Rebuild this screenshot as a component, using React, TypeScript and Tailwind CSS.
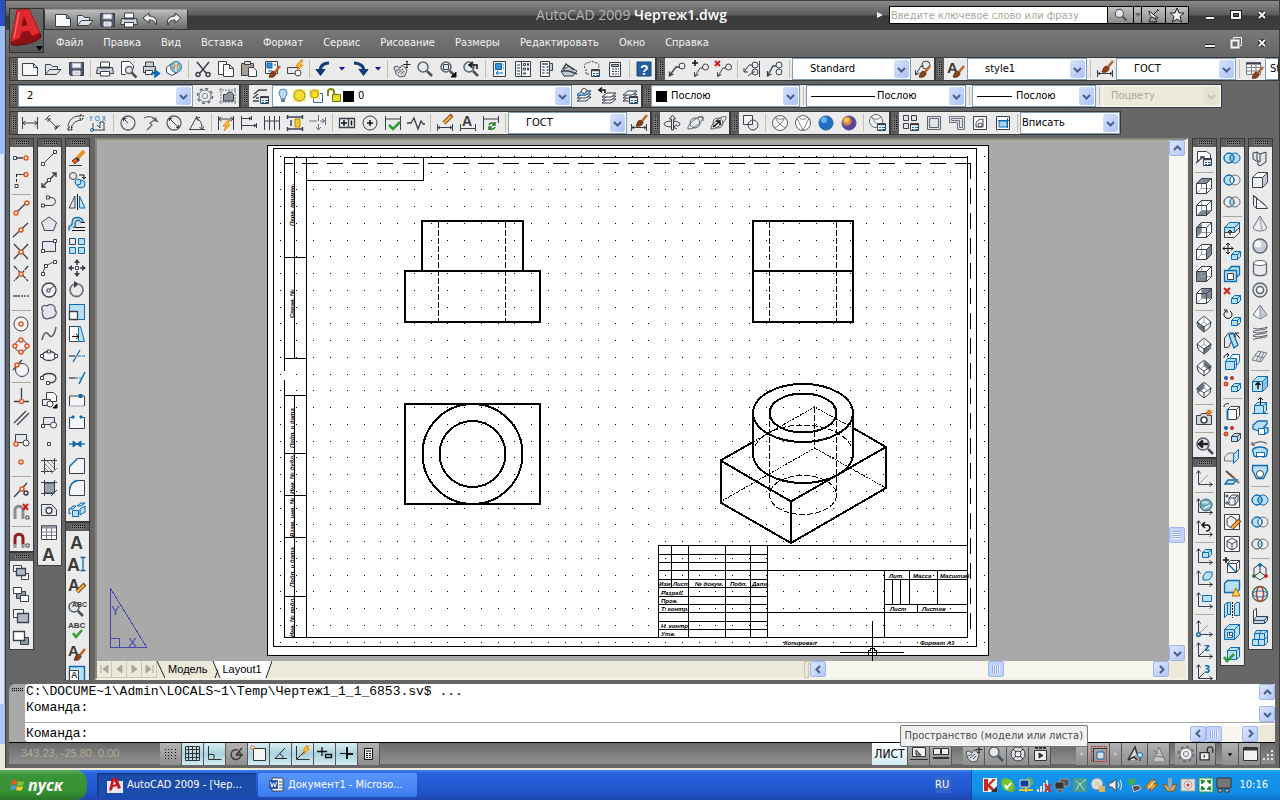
import type { ReactNode } from "react";

const K = "#39414d";
const B = "#0f6ab4";
const L = "#b9dff2";
const O = "#e9541b";

type PProps = { d: string; s?: string; f?: string; w?: number; dash?: string };
const P = ({ d, s = K, f = "none", w = 1, dash }: PProps) => (
  <path d={d} stroke={s} fill={f} strokeWidth={w} strokeDasharray={dash} />
);

type CProps = { x: number; y: number; r: number; s?: string; f?: string; w?: number };
const C = ({ x, y, r, s = K, f = "none", w = 1 }: CProps) => (
  <circle cx={x} cy={y} r={r} stroke={s} fill={f} strokeWidth={w} />
);

// orange snap marker
const Dot = ({ x, y }: { x: number; y: number }) => <C x={x} y={y} r={2} s={O} f="#fff" w={1.5} />;

// small grip square
const Sq = ({ x, y }: { x: number; y: number }) => <P d={`M${x - 1.5} ${y - 1.5}h3v3h-3z`} f="#fff" />;

const Brush = ({ x = 0, y = 0 }: { x?: number; y?: number }) => (
  <g transform={`translate(${x} ${y})`}>
    <P d="M17 5l-5 6" s="#b5652a" w={2.5} />
    <P d="M6 16c1-1 1-5 4-6l3 2c0 3-3 5-7 4z" s="#6b3211" f="#8a4216" />
  </g>
);

const Pencil = () => (
  <>
    <P d="M17 5l-8 8" s="#8a4a12" w={4} />
    <P d="M16 6l-7 7" s="#f8b54a" w={2} />
  </>
);

const Glass = ({ x = 8, y = 8, r = 5 }) => (
  <>
    <P d={`M${x + r - 1} ${y + r - 1}l5 5`} s="#4a4f58" w={2.5} />
    <C x={x} y={y} r={r} s="#5c626c" f="#e3eaf0" w={1.5} />
  </>
);

const Bolt = ({ x = 0, y = 0 }) => <P d={`M${x + 6} ${y}l-5 6h3l-2 5 6-6h-3l3-5z`} s="#e8861a" f="#ffc62e" />;

const Sheets = () => (
  <>
    <P d="M3 15l5-4h9l-5 4z" f="#f6f8fa" />
    <P d="M3 12l5-4h9l-5 4z" f="#f6f8fa" />
    <P d="M3 9l5-4h9l-5 4z" f="#f6f8fa" />
  </>
);

const Panel = () => (
  <>
    <P d="M9.5 10.5h8v7h-8z" f="#fff" />
    <P d="M10 11.5h8" s={K} w={1.5} />
    <P d="M11 14.5h2m1 0h3m-6 2h2m1 0h3" s={B} />
  </>
);

const Cube = ({ top = "#fff", front = "#fff", side = "#fff", s = K }) => (
  <>
    <P d="M2.5 7.5l5-5h10l-5 5z" f={top} s={s} />
    <P d="M2.5 7.5h10v10h-10z" f={front} s={s} />
    <P d="M12.5 7.5l5-5v10l-5 5z" f={side} s={s} />
  </>
);

const WireCube = ({ d }: { d: string }) => (
  <>
    <P d="M2.500 7.500l5-5h10v10l-5 5h-10z" f="#fff" />
    <P d={d} f="#7d8592" s="#7d8592" />
    <P d="M7.500 2.500v10h10M7.500 12.500l-5 5" s="#9aa0a8" />
    <P d="M2.500 7.500l5-5h10v10l-5 5h-10zM2.500 7.500h10v10M12.500 7.500l5-5" />
  </>
);

const IsoCube = ({ d }: { d: string }) => (
  <>
    <P d="M10 2l7 6-1 5-6 5-6-5-1-5z" f="#fff" />
    <P d={d} f="#69717d" s="#69717d" />
    <P d="M3 8l7 5 7-5M10 13v5" />
    <P d="M4 13l6-5 6 5M10 2v6" s="#9aa0a8" />
  </>
);

const MiniCube = ({ x = 9, y = 8, s = B }) => (
  <g transform={`translate(${x} ${y})`}>
    <P d="M.5 3.500l3-3h6v5l-3 3h-6z" s={s} f={L} />
    <P d="M.5 3.500h6v5M6.500 3.500l3-3" s={s} />
  </g>
);

const Axes = () => <P d="M4.500 3v13.500h14M2.500 5.500l2-3 2 3M15.500 14.500l3 2-3 2" />;
const Dim = () => <P d="M2.500 4v12M17.500 4v12M3 10h14M5.500 8l-3 2 3 2M14.500 8l3 2-3 2" />;
const LowDim = () => <P d="M2.500 11v7M17.500 11v7M3 14.500h14M5 13l-2 1.500 2 1.500M15 13l2 1.500-2 1.500" />;

const Letter = ({ x = 2, y = 17, size = 18, children }: { x?: number; y?: number; size?: number; children: ReactNode }) => (
  <text x={x} y={y} fontSize={size} fill="#3b3b3b" stroke="none" fontFamily="Liberation Sans, sans-serif" fontWeight="bold">
    {children}
  </text>
);

const Rings = ({ a = "none", b = "none", mid = "none" }) => (
  <>
    <C x={7} y={10} r={5} s={a === "none" ? "#6d747e" : B} f={a} />
    <C x={13} y={10} r={5} s={b === "none" ? "#6d747e" : B} f={b} />
    <path d="M10 6a5 5 0 0 1 0 8a5 5 0 0 1 0-8z" fill={mid} stroke={B} />
    <C x={7} y={10} r={5} s={a === "none" ? "#6d747e" : B} />
  </>
);

const icons: Record<string, ReactNode> = {
  // standard
  new: <P d="M2.5 4.5h11l4 4v8h-15zM13.5 4.5v4h4" f="#f7f8f9" />,
  open: <P d="M2.500 15.500v-10h5l2 2h5v3M2.500 15.500l4-5h11.500l-4.500 5z" f="#dfe5ea" />,
  save: (
    <>
      <P d="M3.500 3.500h14v13h-13l-1-1z" f="#4c5566" />
      <P d="M6 4h9v5H6z" s="#8d96a5" f="#f3f5f8" />
      <P d="M7 12h7v4H7z" s="#f3f5f8" f="#cfd4db" />
    </>
  ),
  print: (
    <>
      <P d="M5.500 8v-5h9v5" f="#fff" />
      <P d="M2.500 8.500h15l1 6h-17z" f="#cdd2d8" />
      <P d="M5 8.500h10" w={2} />
      <P d="M5.500 12.500h9v4.500h-9z" f="#fff" />
    </>
  ),
  preview: (
    <>
      <P d="M3.500 15.500v-13h8l4 4v3M3.500 15.500h4" f="#fff" />
      <Glass x={11} y={11} r={3.500} />
    </>
  ),
  publish: (
    <>
      <P d="M4.500 7v-4h8v4M2.500 7.500h12v6h-12z" f="#cdd2d8" />
      <P d="M4.500 11.500h7v4h-7z" f="#fff" />
      <P d="M10 14.500h5M14 11l4.500 3.500-4.500 3.500z" s={B} f={B} w={1.500} />
    </>
  ),
  globe: (
    <>
      <P d="M2.500 8.500l5-4h6v9l-6 3-5-3z" f="#fff" />
      <C x={12} y={8} r={5.500} s="#2d7bb5" f="#7cc1e0" />
      <P d="M10 4c2 2 1 5 4 7M15 5c-3 1-4 3-7 5" s="#e8861a" w={1.500} />
      <P d="M12 3v10" s="#fff" />
    </>
  ),
  cut: (
    <>
      <P d="M4 3l9 11M16 3L7 14" w={1.500} />
      <C x={5} y={15.500} r={2} w={1.500} />
      <C x={15} y={15.500} r={2} w={1.500} />
    </>
  ),
  copyclip: (
    <>
      <P d="M2.500 2.500h8v13h-8z" f="#fff" />
      <P d="M7.500 5.500h6l4 4v8h-10zM13.500 5.500v4h4" f="#fff" />
    </>
  ),
  paste: (
    <>
      <P d="M2.500 4.500h12v12h-12z" f="#a99f93" />
      <P d="M5.500 2.500h6v3h-6z" f="#d8dce2" />
      <P d="M9.500 8.500h5l3 3v6h-8z" f="#fff" />
    </>
  ),
  match: (
    <>
      <P d="M3.500 2.500h12v12h-12z" f="#f3f5f8" />
      <P d="M5 4h5v5H5z" s={B} f="#3f8dcb" />
      <P d="M6 12h4M12 6h2" s={B} />
      <Brush x={1} y={2} />
    </>
  ),
  blockedit: (
    <>
      <P d="M2.500 8.500h11v6h-11z" f="#e4e7eb" />
      <C x={13} y={14} r={3} f="#fff" />
      <Bolt x={10} y={1} />
    </>
  ),
  undo: (
    <>
      <P d="M15 4c-6 0-9 3-9 9" s="#123a72" w={3} />
      <P d="M2 10.500h9l-4.500 6z" s="#123a72" f="#123a72" />
    </>
  ),
  redo: (
    <>
      <P d="M4 4c6 0 10 3 10 9" s="#123a72" w={3} />
      <P d="M9 10.500h9l-4.500 6z" s="#123a72" f="#123a72" />
    </>
  ),
  pan: (
    <>
      <P d="M2 8l3-1 3 2 2-3 3 2 2 3-2 6-5 1-4-3z" s="#555b64" f="#d5d8dc" />
      <P d="M4 12l4-2M6 14l5-4M9 15l3-3" s="#555b64" />
      <P d="M15 2v7M11.500 5.500h7M14 3l1-1 1 1M14 8l1 1 1-1" s="#222" />
    </>
  ),
  zoom: <Glass />,
  zoomwin: (
    <>
      <Glass />
      <P d="M5.500 5.500h5v5h-5z" />
      <P d="M18 13v5h-5z" s="#111" f="#111" />
    </>
  ),
  zoomprev: (
    <>
      <Glass />
      <P d="M9 6h7v4M12 3l-4 3 4 3" s="#111" w={1.500} />
    </>
  ),
  properties: (
    <>
      <P d="M3.500 2.500h12v15h-12z" f="#f3f5f8" />
      <P d="M5.500 4.500h6v6h-6z" s={B} f="#3f8dcb" />
      <P d="M13 6h1M13 9h1M6 14h7M8 12l-2 2 2 2" s={B} />
    </>
  ),
  designcenter: (
    <>
      <P d="M2.500 2.500h15v15h-15zM8.500 3v14" f="#f3f5f8" />
      <P d="M4 6h3M4 9h3M4 12h3M4 15h3" />
      <P d="M10.500 4.500h2v2h-2zM14.500 4.500h1v2h-1zM10.500 9h2v2h-2zM14.500 9h1v2h-1zM10.500 14h2v1h-2z" />
    </>
  ),
  palettes: (
    <>
      <P d="M4.500 2.500h9v15h-9z" f="#f3f5f8" />
      <P d="M13.500 4.500h3v7h-3z" f="#c4cad2" />
      <P d="M6 5h6M6.500 8h2m2 0h2m-6 3h2m2 0h2m-6 3h2m2 0h2" w={2} s="#777f8b" />
    </>
  ),
  sheetset: (
    <>
      <P d="M2 12l8-5 8 5-4 5H5z" f="#c4cad2" />
      <P d="M4 10l3-5 8 6M2 12h8l8 3" w={1.500} />
    </>
  ),
  markup: (
    <>
      <P d="M3 9c-2-4 2-6 4-5 2-3 5-1 6 0 4-1 5 3 3 5" dash="2 1" />
      <P d="M4 10v5h4" dash="2 1" />
      <Panel />
    </>
  ),
  calc: (
    <>
      <P d="M4.500 3.500h11v14h-11z" f="#f3f5f8" />
      <P d="M6.500 5.500h7v2h-7z" f="#aeb6c0" />
      <P d="M7 10h2m1 0h2m1 0h1M7 12.500h2m1 0h2m1 0h1M7 15h2m1 0h2m1 0h1" />
    </>
  ),
  help: (
    <>
      <P d="M3 3h14v14H3z" s="#17457c" f="#245e9f" />
      <text x={6} y={15.500} fontSize={14} fontWeight="bold" fill="#fff" stroke="none" fontFamily="Liberation Sans, sans-serif">?</text>
    </>
  ),
  // multileaders
  leader: <><P d="M3 16l6-8h4M2.500 12.500v4.500l4-2" w={1.300} /><C x={15} y={7} r={3} /></>,
  leaderadd: <><P d="M5 17l5-8h3M4.500 13v4.500l4-2" /><C x={15.500} y={8} r={3} /><P d="M2 4h6M5 1v6" s="#111" w={1.500} /></>,
  leaderdel: <><P d="M5 17l5-8h3M4.500 13v4.500l4-2" /><C x={15.500} y={8} r={3} /><P d="M2 2l5 5M7 2L2 7" s="#cf1f1f" w={2} /></>,
  leaderalign: <><P d="M2 13l5-7h4M2 9v4h4M6 17l5-4h2M17.500 2v16" /><C x={13} y={6} r={3} /><C x={13} y={13} r={3} /></>,
  leadercollect: <><P d="M3 16l5-9h3M2.500 12v5l4-2" w={1.300} /><C x={14} y={6} r={3} /><C x={14} y={13} r={3} /></>,
  leaderstyle: <><P d="M3 15l5-8h3M2.500 11v5l4-2" /><C x={13} y={6} r={4} /><Brush y={2} /></>,
  textstyle: <><Letter x={1} y={14} size={15}>A</Letter><Brush x={1} y={2} /></>,
  dimstyle: <><LowDim /><Brush x={1} y={-3} /></>,
  tablestyle: (
    <>
      <P d="M2.500 3.500h14v12h-14zM2.500 8.500h14M2.500 12h14M7.500 6v9.500M12 6v9.500" f="#fff" s="#777f8b" />
      <P d="M2 4.500h15" w={2} />
      <Brush x={2} y={3} />
    </>
  ),
  // workspaces and layers
  gear: (
    <>
      <circle cx={10} cy={10} r={7.500} stroke="#5c636e" strokeWidth={1.500} strokeDasharray="3 2.890" />
      <C x={10} y={10} r={6} s="#6d747e" f="#eceef0" />
      <C x={10} y={10} r={2.500} s="#6d747e" f="#fff" />
    </>
  ),
  wshome: (
    <>
      <P d="M3 2v16M17 2v16M1 4h18M1 16h18" dash="2 1" s="#6d747e" />
      <P d="M5.500 8.500h3l2-2.500h3l2 3v6h-10z" f="#8e959f" />
    </>
  ),
  layers: <><P d="M3 8l5-4h8M2 12l5-4M2 15h6M5 12h3" w={1.300} /><Panel /></>,
  layercur: <><Sheets /><P d="M3 9l5-4h9l-5 4z" s={B} f={L} /><C x={10} y={5} r={2.500} f="#fff" /></>,
  layerprev: <><g transform="translate(2 2)"><Sheets /></g><P d="M2 4h6v3M5 1.500L2 4l3 2.500" s="#111" w={1.500} /></>,
  layerstate: <><Sheets /><Panel /></>,
  // dimensions
  dimlinear: <Dim />,
  dimaligned: <P d="M2 7l5-5M12 17l5-5M4.500 5.500l9.500 9M5 9V6h3M11 15h3v-3" />,
  dimarc: <><P d="M5 17C5 11 10 7 16 7M2 13C3 7 7 3 13 3" /><P d="M2 17h4v-3H2zM14 2h3v4h-3z" s="#111" dash="2 1" /></>,
  dimord: <><text x={0} y={8} fontSize={7} fill={B} stroke="none">Y O X</text><P d="M4 10v7h12M8 12l3 3V9h4v8" /><C x={3} y={17} r={1.500} s={B} /></>,
  dimradius: <><C x={10} y={10} r={7} w={1.300} s="#5c636e" /><P d="M10 10L6 6M5.500 8.500v-3h3" /></>,
  dimjog: <P d="M3 5c5-3 11-1 14 4M6 17l5-5-2-2 6-4M11.500 5.500h3.500V9" w={1.300} s="#5c636e" />,
  dimdiam: <><C x={10} y={10} r={7} w={1.300} s="#5c636e" /><P d="M5.500 5.500l9 9M5.500 8v-2.500h2.500M12 14.500h2.500V12" /></>,
  dimang: <P d="M2 16.500h16M3 16L10 3M9 5c5 2 6 6 6 11M11.500 8L9 5l4-.5M12.500 14l2.500 2.500 2-3" />,
  dimquick: <><P d="M2.500 3v14M17.500 3v14M3 6h14M5.500 4l-3 2 3 2M14.500 4l3 2-3 2" /><Bolt x={6} y={7} /></>,
  dimbase: <P d="M2.500 3v14M12.500 3v4M17.500 10v5M3 5.500h9M3 12.500h14M10 4l2 1.500-2 1.500M15 11l2 1.500-2 1.500" />,
  dimcont: <P d="M2.500 3v14M7.500 3v14M12.500 3v14M17.500 3v14M3 8h14" />,
  dimspace: <><P d="M2.500 2v4M17.500 2v4M3 4h14M2.500 14v4M17.500 14v4M3 16h14M6 7v6" w={1.500} /><P d="M10 6h5v8h-5z" s="#b98a12" f="#f4c534" /></>,
  dimbreak: <P d="M1 8h8M12 8h5M17.500 4v8M10.500 2v6M10.500 11v6M8 14l2.500 3 2.500-3M14 6l3 2-3 2" s="#6d747e" />,
  tolerance: <><P d="M2.500 5.500h15v9h-15zM11.500 5.500v9" w={1.300} /><P d="M4 10h6M7 7v6" s="#111" w={1.500} /><P d="M14.500 7.500v5" s="#111" w={1.500} /></>,
  centermark: <><C x={10} y={10} r={7} /><P d="M10 7v6M7 10h6" s="#111" w={1.500} /></>,
  inspect: <><P d="M2.500 3v14M17.500 3v14M3 6h14" /><P d="M6 12l4 4 7-7" s="#2e9e2e" w={2.500} /></>,
  joglinear: <P d="M1 10h4l3-5 4 11 3-8 2 3h2" w={1.300} />,
  dimedit: <><LowDim /><g transform="translate(0 -3)"><Pencil /></g></>,
  dimtedit: <><P d="M2.500 11v7M17.500 11v7M3 15.500h14" /><Letter x={4} y={13} size={14}>A</Letter></>,
  dimupdate: <><P d="M2.500 3v14M17.500 3v7M3 6h14" /><P d="M8 12c1-3 5-3 6 0M14 14c-1 3-5 3-6 0M14 9v3h-3M8 17v-3h3" s="#2e7d2e" w={1.500} /></>,
  // orbit and visual styles
  orbit: <><ellipse cx={10} cy={11} rx={8} ry={3} /><P d="M9.500 17V6H7.500l3-4 3 4h-2v11zM15 12l-4 2 4 2" f="#e8ebee" /></>,
  orbitfree: <><C x={10} y={10} r={5} f="#e8ebee" s="#5c636e" /><P d="M3 16C1 12 15 1 18 4c1 3-9 13-15 12zM13 4h5v4" s="#5c636e" /></>,
  orbitcont: <><C x={10} y={10} r={5} f="#e8ebee" s="#5c636e" /><P d="M3 16C1 12 15 1 18 4c1 3-9 13-15 12z" s="#5c636e" /><P d="M5 14l7-6M8 8h4v4" s="#111" w={1.500} /></>,
  wire2d: <><P d="M2.500 2.500h9v9h-9z" f="#f3f5f8" /><C x={12} y={12} r={5} /></>,
  wire3d: <><C x={10} y={10} r={7.500} f="#f6f6f6" s="#5c636e" /><P d="M5 4c2 5 6 9 11 11M15 4C13 9 9 13 4 15M5 4c4 3 8 3 10 0" s="#777f8b" /></>,
  hidden: <><C x={10} y={10} r={7.500} f="#fff" s="#5c636e" /><P d="M4 5c2 5 4 8 6 12M16 5c-2 5-4 8-6 12M5 4c3 3 7 3 10 0" s="#777f8b" /></>,
  realistic: <><C x={10} y={10} r={7} s="#1a67b5" f="#1f6fc0" /><C x={8} y={7} r={3} s="none" f="#6cb2ee" /></>,
  conceptual: <><C x={10} y={10} r={7} s="#5a4696" f="#5a4696" /><C x={8} y={8} r={4.500} s="none" f="#d98a3a" /><C x={7.500} y={7} r={2.500} s="none" f="#fbc64a" /></>,
  vsmanage: <><C x={8} y={8} r={6.500} f="#f6f6f6" s="#5c636e" /><P d="M3 4c3 3 7 3 10 0M4 4c2 4 4 7 7 9" s="#777f8b" /><Panel /></>,
  vpdialog: <><P d="M2.500 2.500h5v5h-5zM10.500 2.500h5v5h-5zM2.500 10.500h5v5h-5z" f="#dfe3e8" /><Panel /></>,
  vpsingle: <P d="M3.500 3.500h13v13h-13z M5.500 5.500h9v9h-9z" f="#e1e4e8" s="#5c636e" />,
  vppoly: <P d="M2.500 3.500h15v13h-7v-7h-8zM4.500 5.500h11v9h-3v-7h-8z" f="#dfe3e8" s="#6d747e" />,
  vpobject: <><P d="M3.500 3.500h13v13h-13z" f="#fff" /><P d="M6 14v-3c0-3 3-5 7-5v8z" /><C x={10} y={12} r={2} /></>,
  vpclip: <><P d="M3.500 3.500h13v13h-13z" f="#fff" /><P d="M6 8h8v6H6z" s={B} f="#a8d4ee" /><P d="M5 7.500h11M14.500 5v10" s={B} /></>,
  // object snap
  ttk: <><P d="M6 10h6" w={1.500} /><Sq x={4} y={10} /><Dot x={15} y={10} /></>,
  from: <><P d="M5.500 4v10" dash="3 2" s="#111" /><P d="M6 4.500h7" /><Sq x={5.500} y={16} /><Dot x={15} y={4.500} /></>,
  endpoint: <><P d="M6 14l9-9" w={1.300} /><Dot x={16} y={5} /><Dot x={5} y={15} /></>,
  midpoint: <><P d="M2 17L17 3" w={1.300} /><Dot x={10} y={10} /></>,
  intersect: <><P d="M3 2l14 15M17 2L3 17" w={1.300} /><Dot x={10} y={10} /></>,
  appint: <><P d="M3 2l14 15M17 2l-5 6M8 12l-5 5" dash="5 1" w={1.300} /><Dot x={10} y={10} /></>,
  extension: <P d="M2 10h7m1 0h2m1 0h2m1 0h2" s="#111" />,
  center: <><C x={10} y={10} r={7} f="#f3f5f8" /><Dot x={10} y={10} /></>,
  quadrant: <><C x={10} y={10} r={6} f="#f3f5f8" /><Dot x={10} y={4} /><Dot x={10} y={16} /><Dot x={4} y={10} /><Dot x={16} y={10} /></>,
  tangent: <><C x={11} y={12} r={6.500} f="#f3f5f8" /><P d="M2 12l9-10" w={1.300} /><Dot x={6} y={7} /></>,
  perpend: <><P d="M10.500 2v13M3 15.500h15" w={1.300} /><Dot x={10.500} y={15.500} /></>,
  parallel: <P d="M3 15L15 3M6 17L18 5" w={1.300} />,
  insert: <><P d="M4.500 4.500h11v8h-11z" f="#e4e7eb" /><C x={15} y={13} r={3} f="#fff" /><Dot x={5} y={14} /></>,
  node: <Dot x={10} y={10} />,
  nearest: <><P d="M3 17L16 3" w={1.300} /><Dot x={11} y={9} /><C x={15} y={13} r={2} w={1.500} /></>,
  nosnap: <><P d="M4 17V8c0-5 8-5 8 0v9" s="#8e8e8e" w={3} /><P d="M12 2l5 6M17 2l-5 6" s="#cf1f1f" w={2} /><Sq x={16.500} y={15.500} /></>,
  osnap: <><P d="M4 15V8c0-5 8-5 8 0v7" s="#8f1f1f" w={3} /><P d="M4 14v4M12 14v4" s="#999" w={3} /><Sq x={16.500} y={15.500} /></>,
  front: <><P d="M2.500 3.500h8v6h-8zM10.500 11.500h7v6h-7z" f="#fff" /><P d="M5.500 6.500h9v7h-9z" f="#b3bac4" w={1.300} /></>,
  above: <><P d="M5.500 7.500h9v7h-9z" f="#8e96a2" /><P d="M2.500 3.500h8v6h-8zM9.500 11.500h8v6h-8z" f="#fff" /></>,
  under: <><P d="M2.500 3.500h10v8h-10z" f="#fff" /><P d="M6.500 7.500h11v9h-11z" f="#b3bac4" w={1.300} /></>,
  back: <><P d="M9.500 9.500h8v7h-8z" f="#8e96a2" /><P d="M2.500 3.500h11v9h-11z" f="#fff" w={1.300} /></>,
  // draw
  line: <><P d="M4 16L16 4" /><Sq x={4} y={16} /><Sq x={16} y={4} /></>,
  xline: <><P d="M3 17L17 3M3 13v4h4M13 3h4v4" w={1.500} /><Sq x={10} y={10} /></>,
  pline: <><P d="M4 13.500h8c6 0 6-8 0-8h-2" /><Sq x={4} y={13.500} /><Sq x={9} y={5.500} /></>,
  polygon: <P d="M10 3l7.500 5.500-3 8h-9l-3-8z" f="#e4e7eb" />,
  rectangle: <><P d="M3.500 5.500h13v10h-13z" f="#e4e7eb" /><Sq x={16} y={5} /><Sq x={4} y={15} /></>,
  arc: <><P d="M4 16c0-6 5-11 12-12" /><Sq x={4} y={16} /><Sq x={7} y={8} /><Sq x={16} y={4} /></>,
  circle: <><C x={10} y={10} r={7} f="#f3f5f8" w={1.300} /><P d="M10 10l5-4" /><Sq x={9.500} y={10.500} /></>,
  revcloud: <P d="M4 9C1 6 4 2 8 4c3-3 9-1 8 4 3 3 0 8-5 8-3 2-8 0-7-3-1-1-1-3 0-4z" f="#e4e7eb" s="#5c636e" w={1.300} />,
  spline: <P d="M3 16c2-9 5-8 7-5s5 2 7-8" s="#5c636e" w={1.500} />,
  ellipse: <><ellipse cx={10} cy={10} rx={7} ry={4.500} fill="#f3f5f8" strokeWidth={1.300} /><Sq x={3} y={10} /><Sq x={17} y={10} /><Sq x={10} y={5.500} /></>,
  ellarc: <><P d="M3 10c1-6 13-6 14 0 0 4-3 5-7 5" w={1.300} /><Sq x={3} y={10} /><Sq x={9} y={15} /></>,
  insertblk: <><P d="M7.500 2.500h7l3 3v6h-10z" f="#fff" /><P d="M3.500 9.500h8v6h-8z" f="#e4e7eb" /><C x={11} y={14} r={3} f="#fff" /><P d="M18 14v4h-4z" s="#111" f="#111" /></>,
  makeblk: <><P d="M4.500 5.500h11v7h-11z" f="#e4e7eb" /><C x={14.500} y={13} r={3} f="#fff" /><Sq x={4} y={14} /></>,
  point: <Sq x={10} y={10} />,
  hatch: <><P d="M5.500 2v16M15.500 2v12M2 4.500h16M2 15.500h12" /><P d="M6 8l7 7M6 12l3 3M8 5l7 7M12 5l3 3M18 12l-6 6" s="#777f8b" /></>,
  gradient: <><P d="M5.500 5h10v10h-10z" f="#9aa1ab" /><P d="M5.500 2v16M15.500 2v12M2 4.500h16M2 15.500h12M18 12l-6 6" /></>,
  region: <><P d="M2.500 4.500h10l5 5v6h-15z" f="#e4e7eb" /><C x={10} y={10.500} r={3} f="#fff" w={1.300} /></>,
  table: <><P d="M2.500 3.500h15v14h-15z" f="#fff" /><P d="M3 5h14" w={3} s="#8e96a2" /><P d="M2.500 10h15M2.500 13.500h15M7.500 6v11M12.500 6v11" s="#777f8b" /></>,
  textA: <Letter x={3}>A</Letter>,
  // modify
  erase: <><P d="M17 3L9 12" s="#e0912c" w={4} /><P d="M9 10l3 3" s="#39414d" w={3} /><P d="M5 13l3-3 3 3-3 3z" s="#8f3a1a" f="#e5592e" /><P d="M2 17.500h13" /></>,
  copy: <><C x={6} y={6} r={3.500} /><C x={14} y={14} r={4} s={B} f={L} /><C x={11} y={12} r={3} s={B} f={L} /><P d="M12 5h5v3M15 7l2 2 2-2" s="#111" /></>,
  mirror: <><P d="M8 4v12H2z" f="#e4e7eb" /><P d="M12.500 4v12h5.500z" f={L} s={B} /><P d="M10.500 2v16" s="#111" /></>,
  offset: <><P d="M2 16.500v-3c0-2 3-2 3-3 0-5 1-7 5-7s6 2 6 5" s={B} f={L} w={1.300} /><P d="M5 16.500h13M6 13.500c3 0 2-3 2-4 0-4 5-4 6-1h4M8 13.500h10" s="#111" /></>,
  array: <><P d="M2.500 2.500h6v6h-6z" /><P d="M11.500 2.500h6v6h-6zM2.500 11.500h6v6h-6zM11.500 11.500h6v6h-6z" s={B} f={L} /></>,
  move: <><P d="M10 2v5M10 13v5M2 10h5M13 10h5" w={1.500} /><P d="M10 1l3 4H7zM10 19l3-4H7zM1 10l4-3v6zM19 10l-4-3v6z" f={K} s="none" /><Sq x={10} y={10} /></>,
  rotate: <><P d="M12 4a6.500 6.500 0 1 1-5 0" s="#6d747e" w={1.800} /><P d="M7 1l5 3-5 4z" f={K} s="none" /></>,
  scale: <><P d="M2.500 2.500h15v15h-15z" s={B} f={L} /><P d="M2.500 9.500h8v8h-8z" f="#fff" w={1.300} /></>,
  stretch: <><P d="M2.500 2.500h9v15h-9z" f="#fff" /><P d="M11.500 2.500h2l4 15h-6z" s={B} f={L} /><P d="M5 12.500h6M9 10l3 2.500-3 2.500" s="#111" /></>,
  trim: <><P d="M2 10h6" w={1.300} /><P d="M11 10h8" s={B} dash="3 1" /><P d="M6 16l7-12" s={B} w={1.300} /></>,
  extend: <><P d="M2 10h6" w={1.300} /><P d="M8 10h6" s={B} dash="3 1" /><P d="M12 16l6-12" s={B} w={1.500} /></>,
  breakpt: <><P d="M2.500 16v-10h15v10" f="#f3f5f8" /><P d="M12 4.500h3v3h-3z" s={B} f={B} /><P d="M2 16h15" s="#9aa0a8" /></>,
  breakln: <><P d="M6 5.500H2.500v11h15v-11H14" f="#f3f5f8" /><P d="M5 4h2v2H5zM13 4h2v2h-2z" s={B} f={B} /></>,
  join: <><P d="M2 10h16" s={B} w={1.300} /><P d="M6 7l4 3-4 3zM14 7l-4 3 4 3z" f={B} s={B} /></>,
  chamfer: <><P d="M2.500 10.500l8-8h7v15h-15z" f="#f3f5f8" /><P d="M2.500 10.500l8-8" s={B} w={1.500} /></>,
  fillet: <><P d="M2.500 12.500c0-6 4-10 9-10h6v15h-15z" f="#f3f5f8" /><P d="M2.500 12.500c0-6 4-10 9-10" s={B} w={1.500} /></>,
  explode: <><P d="M2 9l4-3h3L6 9zM10 6l4-3h4l-4 3zM13 9l5-3v6l-5 3z" s={B} f={L} /><P d="M5.500 10.500h6v6h-6zM2 9v5l2-1" s={B} f={L} /></>,
  textI: <><Letter x={0}>A</Letter><P d="M13.500 3.500h5M13.500 16.500h5M16 4v12" s={B} w={1.300} /></>,
  textedit: <><Letter x={1} y={15} size={16}>A</Letter><g transform="translate(1 3)"><Pencil /></g></>,
  find: <><Glass x={7} y={9} r={5} /><Letter x={5} y={9} size={7}>ABC</Letter></>,
  spell: <><Letter x={1} y={8} size={8}>ABC</Letter><P d="M6 13l3 4 6-7" s="#2e9e2e" w={2.500} /></>,
  scaletext: <><P d="M2.500 2.500h15v15h-15z" s={B} f={L} w={1.500} /><P d="M2.500 6.500h9v11h-9z" f="#fff" /><Letter x={4} y={14} size={9}>A</Letter></>,
  // views
  viewmgr: <><P d="M3.500 14.500v-11h9l4 3v4" f="#fff" /><P d="M2 15l7-6M6 9h4v4" w={1.300} /><Panel /></>,
  vtop: <WireCube d="M2.500 7.500l5-5h10l-5 5z" />,
  vbottom: <WireCube d="M2.500 17.500l5-5h10l-5 5z" />,
  vleft: <WireCube d="M2.500 7.500l5-5v10l-5 5z" />,
  vright: <WireCube d="M12.500 7.500l5-5v10l-5 5z" />,
  vfront: <WireCube d="M2.500 7.500h10v10h-10z" />,
  vback: <WireCube d="M7.500 2.500h10v10h-10z" />,
  isosw: <IsoCube d="M3 8l7 5v5l-6-5z" />,
  isose: <IsoCube d="M17 8l-7 5v5l6-5z" />,
  isone: <IsoCube d="M10 2l7 6-1 5-6-5z" />,
  isonw: <IsoCube d="M10 2l-7 6 1 5 6-5z" />,
  camera: <><P d="M2.500 7.500h4l1-2h5l1 2h4v9h-15z" f="#d5d8dc" /><C x={10} y={12} r={3} f="#fff" w={1.500} /><P d="M15 1v7M11.500 4.500h7M12.500 2l5 5M17.500 2l-5 5" s="#ef8a1c" /><C x={15} y={4.500} r={1.500} s="#c22" f="#ffd23a" /></>,
  vprev: <><Glass x={9} y={8} r={6} /><P d="M6 8h8M9 4.500L5 8l4 3.500" s="#222" w={2.500} /></>,
  ucs: <><Axes /><P d="M5 16l9-9" dash="2 1" s="#777" /></>,
  ucsworld: <><Axes /><C x={12} y={9} r={6} s="#35687f" f="#6fa9b8" /><P d="M8 7c3-2 4 1 6-1M10 13c1-3 4-1 6-4" s="#cfe6d8" w={2} /></>,
  ucsprev: <><Axes /><P d="M9 7h4c4 0 4 6-1 6M11 4L8 7l3 3" s="#111" w={1.500} /></>,
  ucsface: <><Axes /><MiniCube x={8} y={3} /></>,
  ucsobj: <><Axes /><P d="M9 8l3-4h6v4l-3 4H9z" s={B} f={L} /></>,
  ucsview: <><Axes /><P d="M8.500 5.500h9v6h-9z" s={B} f={L} /></>,
  ucsorigin: <><Axes /><P d="M5 16l9-9" dash="2 1" s="#777" /><C x={4.500} y={16.500} r={1.800} s={B} f="#fff" w={1.500} /></>,
  ucsz: <><Axes /><P d="M5 16l5-5" /><text x={10} y={11} fontSize={11} fontWeight="bold" fill={B} stroke="none">z</text></>,
  ucs3: <><Axes /><P d="M5 16l5-5" /><text x={10} y={11} fontSize={10} fontWeight="bold" fill={B} stroke="none">3</text></>,
  // solid editing
  union: <Rings a={L} b={L} mid="#8cc4e8" />,
  subtract: <Rings a={L} mid="#fff" />,
  intersection: <Rings mid={L} />,
  extface: <><Cube top={L} front={L} side={L} s={B} /><P d="M2.500 12.500h10l5-5v5l-5 5h-10z" f="#eee" /><P d="M8 15v-5M6 12l2-2 2 2" s="#111" /></>,
  moveface: <><P d="M6 1v11M1 6.500h10M4 3l2-2 2 2M4 10l2 2 2-2M3 4.500l-2 2 2 2M9 4.500l2 2-2 2" s="#111" /><MiniCube y={9} /></>,
  offface: <><P d="M6.500 5.500l3-3h8v8l-3 3M2.500 6.500h12v11h-12z" s={B} f={L} w={1.300} /><P d="M5.500 9.500h6v6h-6z" f="#fff" /></>,
  delface: <><P d="M2 2l6 6M8 2L2 8" s="#cf1f1f" w={2} /><MiniCube y={9} /></>,
  rotface: <><P d="M8 3a4 4 0 1 1-4 0M2 2h3v3" s="#111" /><MiniCube y={9} /></>,
  taperface: <><P d="M2.500 17.500V8l4-5h4v6l-4 8.500z" f="#e4e7eb" /><P d="M7 5l4-2 5 12-4 3z" s={B} f={L} w={1.300} /><P d="M18 8l-4-4M13 7V3h4" s="#111" /></>,
  copyface: <><P d="M8.500 5.500l2-3h7v7l-2 3h-7z" s={B} f="#fff" /><P d="M3.500 9.500h9v8h-9zM3.500 9.500l2-3h9l-2 3M14.500 6.500v8l-2 3" s={B} f={L} /><P d="M2 6c0-3 3-4 5-3M5 1l2 2-2 2" s="#111" /></>,
  colorface: <><C x={4} y={4} r={2} f="#2458a8" s="none" /><C x={10} y={4} r={2} f="#c03030" s="none" /><C x={4} y={10} r={2} f="#e8801c" s="#a33" /><MiniCube y={9} /></>,
  copyedge: <><P d="M5.500 7.500l3-3h9v9l-3 4h-9z" f="#fff" /><P d="M14.500 7.500v10M5.500 7.500h9l3-3" /><P d="M5.500 7.500v10" s={B} w={2} /><P d="M2 5c0-3 3-4 5-3" s="#111" /></>,
  coloredge: <><C x={4} y={4} r={2} f="#2458a8" s="none" /><C x={10} y={4} r={2} f="#c03030" s="none" /><C x={4} y={10} r={2} f="#e8801c" s="#a33" /><MiniCube y={9} s={K} /></>,
  imprint: <><P d="M2.500 11l4-4h5v8h-9z" f="#e4e7eb" s="#6d747e" /><P d="M11.500 8.500l5-5v9l-5 5z" s={B} f={L} /></>,
  clean: <><P d="M3 16l3-4h9l-4 4z" s={B} f={L} w={1.300} /><P d="M4 3l8 7" s="#6b4a3a" w={2} /><P d="M11 9l6 6" w={2} s="#6d747e" /></>,
  separate: <><P d="M2.500 2.500h15v15h-15z" f="#fff" /><P d="M4 5h2v2H4zM4 12h2v2H4z" /><P d="M7 8l3-3h6v6l-3 4H7zM7 8h6v7M13 8l3-3" f="#eef1f4" /></>,
  shelledit: <><P d="M2.500 2.500h15v15h-15z" f="#fff" /><P d="M5 7l4-3 5 3v6l-5 3-4-3z" f="#eef1f4" /><g transform="translate(1 3)"><Pencil /></g></>,
  check: <><P d="M2.500 2.500h15v15h-15z" f="#fff" /><P d="M5 7l5-3 5 3v6l-5 3-5-3zM5 7l5 3 5-3M10 10v6" f="#eef1f4" /></>,
  solidadd: <><P d="M1 4h6M4 1v6" s="#111" w={1.500} /><P d="M5.500 7.500l3-3h9v8l-3 4h-9z" f="#fff" /><P d="M14.500 7.500v9M5.500 7.500h9l3-3" /><P d="M6 8l8 8" s={B} w={1.500} /></>,
  interfere: <><P d="M2.500 5.500l3-3h12v9l-3 3h-12z" s={B} f={L} w={1.300} /><P d="M14 10l4 8h-8z" s="#b06a12" f="#ffd257" /></>,
  slice: <><P d="M2.500 4.500l3-2v12l-3 3zM5.500 2.500h3v12h-3zM12.500 4.500l2-2h3v13h-5z" s={B} f={L} /><P d="M10.500 2v16" dash="2 1" s="#111" /></>,
  shell: <><Cube top={L} front="#a8d4ee" side={L} s={B} /><P d="M5.500 10.500h5v5h-5z" f="#fff" s={B} /><P d="M7.500 10.500v3h3" s={K} /></>,
  ok: <><P d="M5.500 6.500l3-3h9v9l-3 3h-9zM5.500 6.500h9v9M14.500 6.500l3-3" s={B} f={L} /><P d="M2 13l3 4 7-7" s="#2e9e2e" w={2.500} /></>,
  // solids
  polysolid: <P d="M3 5l4-1v8l3 2V6l6-2v10l-6 4-2-1v-3l-5-3z M7 4l3 2" f="#dfe3e8" />,
  box: <Cube top="#fff" front="#eceef1" side="#c4cad2" />,
  wedge: <P d="M3.500 3.500v10l3 3h11l-2-3zM3.500 3.500l3 3v10M3.500 3.500l12 10" f="#f3f5f8" />,
  cone: <><P d="M10 2L3 14c2 4 12 4 14 0z" f="#eceef0" s="#6d747e" /><P d="M10 4l2 12" s="#b8bdc5" w={2} /></>,
  sphere: <><C x={10} y={10} r={7} f="#c9ced6" w={1.300} s="#5c636e" /><C x={8} y={8} r={3.500} s="none" f="#f6f8fa" /></>,
  cylinder: <><P d="M3.500 5v10c1 3.500 12 3.500 13 0V5" f="#e9ebee" w={1.300} s="#5c636e" /><ellipse cx={10} cy={5} rx={6.500} ry={2.500} fill="#fff" stroke="#5c636e" /></>,
  torus: <><C x={10} y={10} r={7} f="#dfe3e8" w={1.300} s="#5c636e" /><C x={10} y={10} r={3.500} f="#fff" w={1.500} s="#5c636e" /></>,
  pyramid: <><P d="M10 3l-7 10 7 4 7-4z" f="#f3f5f8" s="#6d747e" /><P d="M10 3v14l7-4z" f="#c4cad2" s="#8e96a2" /></>,
  helix: <P d="M3 4c4 2 12 0 14-1 1 4-12 2-14 5 4 2 12 0 14-1 1 4-12 2-14 5 4 2 12 0 14-1 1 4-12 2-14 5" s="#555b64" />,
  planar: <P d="M2 14l6-9 9 2-6 9zM5 9.500l9 2.500M11 5.500L6 15M14 6.500L9 16" f="#dfe3e8" s="#777f8b" />,
  extrude: <><Cube top={L} front={L} side="#8cc4e8" s={B} /><P d="M8 15v-6M5.500 11L8 8.500l2.500 2.500" s="#111" w={1.500} /></>,
  presspull: <><P d="M4.500 9.500l3-3h9v8l-3 3h-9zM4.500 9.500h9v8M13.500 9.500l3-3M2 17.500h16" s={B} f={L} /><P d="M10.500 9V2M8 4l2.500-2.500L13 4" s="#111" /></>,
  sweep: <><P d="M3 7l5-4h9v3l-3 3 4 1v4l-3 2H9v-3l-6-2z" s={B} f={L} w={1.300} /><P d="M8.500 10.500h6v6h-6z" f="#fff" s={B} /></>,
  revolve: <><P d="M2.500 10c3-4 12-4 15 0l-1 6-3 1v-4H7v4l-3-1z" s={B} f={L} w={1.300} /><P d="M6.500 12.500h8v4h-8z" f="#fff" s={B} /><P d="M2 5c4-4 12-4 15-1M2 2v3h3" /></>,
  loft: <><P d="M2.500 3.500h15v5l-4 8h-7l-4-8z" s={B} f={L} w={1.300} /><C x={10} y={12} r={3.500} f="#fff" /></>,
  move3d: <><P d="M10 2v8l-7 5M10 10l7 5M4 6l6-4 6 4v8l-6 4-6-4z" /><C x={10} y={3} r={1.500} s={B} f={B} /><C x={4} y={14} r={1.500} s="#2e7d2e" f="#2e7d2e" /><C x={16} y={14} r={1.500} s="#c22" f="#c22" /></>,
  rotate3d: <><C x={10} y={10} r={7.500} s="#2e7d4e" w={1.500} /><ellipse cx={10} cy={10} rx={3.500} ry={7.500} stroke="#c33" strokeWidth={1.500} /><ellipse cx={10} cy={10} rx={7.500} ry={3} stroke="#3568a8" /></>,
  align3d: <><P d="M3.500 4.500l3-2v9l-3 5z" f="#fff" /><P d="M3.500 14.500l3-4h11v4l-3 3h-11zM3.500 14.500h11v3M14.500 14.500l3-4" f={L} /></>,
  array3d: <P d="M2.500 11.500h6v6h-6zM8.500 11.500h6v6h-6zM4.500 5.500h5v6h-5zM9.500 5.500h5v6h-5zM4.500 5.500l2-3h5l-2 3M11.500 2.500h6l-3 3M17.500 2.500v6l-3 3M17.500 8.500v6l-3 3" s={B} f={L} />,
};

const Icon = ({ name }: { name: string }) => (
  <svg viewBox="0 0 20 20" className="w-5 h-5 shrink-0" fill="none" stroke={K}>
    {icons[name]}
  </svg>
);

const Grip = () => (
  <div className="w-2 shrink-0 bg-[#5d5d5d] flex items-center justify-center">
    <div className="w-1 h-3.5 bg-[conic-gradient(#111_25%,#777_0)] bg-[length:2px_2px]" />
  </div>
);

const Tools = ({ list }: { list: string }) => (
  <>
    {list.split(" ").map((name, i) => {
      if (name === "|") {
        return <span key={i} className="w-1.5 shrink-0 flex justify-center py-0.5"><span className="w-px bg-[#c5c0a8]" /></span>;
      }
      if (name === "v") {
        return (
          <button key={i} aria-label="Список" className="w-[13px] shrink-0 flex items-center justify-center">
            <svg viewBox="0 0 6 4" className="w-1.5 h-1"><path d="M0 0h6L3 3.500z" fill="#14148c" /></svg>
          </button>
        );
      }
      return (
        <button key={i} aria-label={name} className="w-[23px] h-[22px] pl-0.5 shrink-0 flex items-center hover:bg-white">
          <Icon name={name} />
        </button>
      );
    })}
  </>
);

const Bar = ({ children, cut = false }: { children: ReactNode; cut?: boolean }) => (
  <div className={`h-6 flex items-stretch bg-[#ebebeb] border border-[#3a3a3a] ${cut ? "flex-1 min-w-0 overflow-hidden" : "shrink-0"}`}>
    <Grip />
    {children}
  </div>
);

const Chevron = ({ dir, color = "#45608f" }: { dir: "up" | "down" | "left" | "right"; color?: string }) => {
  const d = { up: "M1 6l3.500-3.500L8 6", down: "M1 3l3.500 3.500L8 3", left: "M6 1L2.500 4.500 6 8", right: "M3 1l3.500 3.500L3 8" }[dir];
  return <svg viewBox="0 0 9 9" className="w-[9px] h-[9px]" fill="none"><path d={d} stroke={color} strokeWidth={2} /></svg>;
};

type ComboProps = { label: string; value: string; width: string; pad?: string; off?: boolean; children?: ReactNode };
const Combo = ({ label, value, width, pad = "pl-[17px]", off = false, children }: ComboProps) => (
  <div className={`${width} ${pad} shrink-0 flex items-center border pr-px ${off ? "bg-[#ece9d8] border-[#f8f6ee]" : "bg-white border-[#7f9db9]"}`}>
    {children}
    <select aria-label={label} disabled={off} className={`flex-1 min-w-0 appearance-none bg-transparent text-[11px] leading-4 outline-none ${off ? "text-[#aca899]" : "text-black"}`}>
      <option>{value}</option>
    </select>
    <span className={`w-[15px] h-[18px] shrink-0 rounded-xs flex items-center justify-center ${off ? "bg-[#e6e2d2]" : "bg-gradient-to-br from-[#d5e1fd] to-[#adc4f7]"}`}>
      <Chevron dir="down" color={off ? "#c5c2b4" : "#45608f"} />
    </span>
  </div>
);

const Palette = ({ list, cut = false }: { list: string; cut?: boolean }) => (
  <div className={`w-[25px] bg-[#ebebeb] border border-[#3a3a3a] ${cut ? "flex-1 min-h-0 overflow-hidden border-b-0" : "shrink-0"}`}>
    <div className="h-2 bg-[#5d5d5d] flex items-center justify-center">
      <div className="w-3.5 h-1 bg-[conic-gradient(#111_25%,#777_0)] bg-[length:2px_2px]" />
    </div>
    {list.split(" ").map((name, i) =>
      name === "|" ? (
        <div key={i} className="h-1.5 px-0.5 flex items-center"><span className="w-full h-px bg-[#aca899]" /></div>
      ) : (
        <button key={i} aria-label={name} className="w-[23px] h-[22px] pl-px flex items-center hover:bg-white">
          <Icon name={name} />
        </button>
      )
    )}
  </div>
);

const ScrollBtn = ({ dir }: { dir: "up" | "down" | "left" | "right" }) => (
  <button aria-label={dir} className="w-4 h-4 shrink-0 rounded-xs border border-[#9db5e8] bg-gradient-to-br from-[#dce6fe] to-[#b4c8f8] flex items-center justify-center">
    <Chevron dir={dir} />
  </button>
);

const Thumb = () => (
  <div className="w-4 h-4 shrink-0 rounded-xs border border-[#9db5e8] bg-[#c3d3fb] flex items-center justify-center">
    <span className="w-2 h-2 bg-[repeating-linear-gradient(90deg,#8fa9e6_0_1px,#eef4fe_1px_2px)]" />
  </div>
);

// paper grid of the layout
const gridDots = () => {
  let d = "";
  for (let r = 0; r < 30; r++) {
    for (let c = 0; c < 43; c++) {
      d += `M${Math.floor(280.2 + c * 16.76)} ${Math.floor(156.2 + r * 16.76) + 0.5}h1`;
    }
  }
  return d;
};

const stamps: [number, number, string][] = [
  [659, 586, "Изм"], [673, 586, "Лист"], [695, 586, "№ докум."], [730, 586, "Подп."], [752, 586, "Дата"],
  [661, 595, "Разраб."], [661, 603, "Пров."], [661, 611, "Т. контр."], [661, 628, "Н. контр."], [661, 636, "Утв."],
  [889, 578, "Лит."], [913, 578, "Масса"], [940, 578, "Масштаб"], [890, 611, "Лист"], [922, 611, "Листов"],
  [784, 645, "Копировал"], [920, 645, "Формат А3"],
];

const sideStamps: [number, string][] = [
  [226, "Перв. примен."], [318, "Справ. №"], [448, "Подп. и дата"], [494, "Инв. № дубл."],
  [537, "Взам. инв. №"], [587, "Подп. и дата"], [637, "Инв. № подл."],
];

const Sheet = () => (
  <svg viewBox="97 140 1072 521" className="block w-[1072px] h-[521px] max-w-none" fill="none" stroke="#000" shapeRendering="crispEdges">
    <path d="M267.500 145.500h721v510h-721z" fill="#fff" />
    <path d="M273.500 148.500h703v498h-703z" />
    <path d={gridDots()} />
    {/* frame */}
    <path d="M284.500 371V157.500H967.500V637.500H284.500V380M306.500 157v480M294.500 157v201M294.500 395v242M284 257.500h22M284 358.500h22M284 395.500h22M284 453.500h22M284 495.500h22M284 537.500h22M284 596.500h22M306 180.500h117.500V157" />
    <path d="M285 163.500h686" strokeDasharray="16 9.100" strokeDashoffset={8} />
    <path d="M970.500 163v474" strokeDasharray="16 9" />
    {/* title block */}
    <path d="M658.500 637v-91.500h309M658 554.500h109M658 562.500h109M658 570.500h109M768 570.500h199M658 579.500h109M658 587.500h109M658 596.500h109M658 604.500h109M658 612.500h309M658 621.500h109M658 629.500h109M671.500 545v42M688.500 545v92M725.500 545v92M750.500 545v92M767.500 545v92M884.500 570v67M884 579.500h83M884 604.500h83M909.500 570v34M937.500 570v34M892.500 579v25M900.500 579v25M917.500 604v8" />
    {/* front, side and top views */}
    <g strokeWidth={2}>
      <path d="M422 271v-50h101v50M405 271h135v51H405zM753 221h100v101H753zM753 271h100M405 404h135v100H405z" />
      <circle cx={472.500} cy={454} r={50} />
      <circle cx={472.500} cy={454} r={33} />
    </g>
    <path d="M438.500 222v99M505.500 222v99M769.500 222v99M836.500 222v99" strokeDasharray="6 2" />
    {/* isometric */}
    <g strokeWidth={2}>
      <ellipse cx={803} cy={413} rx={50} ry={29} />
      <ellipse cx={803} cy={413} rx={33.500} ry={19.500} />
      <path d="M753 413v41a50 29 0 0 0 100 0v-41" />
      <path d="M753 442l-32.500 18.500v42l70.500 40.500 95-55v-41l-33-19M720.500 460.500l70.500 41 95-54.500M791 501.500v41.500" />
    </g>
    <g strokeDasharray="6 2">
      <path d="M753 442l61.500-35 38.500 21M720 502l94.500-54 71.500 40" strokeDasharray="2 1" />
      <path d="M753 454a50 29 0 0 1 100 0M769.500 413v82M836.500 413v82M814.500 407v41" />
      <ellipse cx={803} cy={495} rx={33.500} ry={19.500} />
    </g>
    <g fill="#000" stroke="none" fontFamily="Liberation Sans, sans-serif" fontStyle="italic" fontWeight="bold" fontSize={6}>
      {stamps.map(([x, y, t], i) => <text key={i} x={x} y={y}>{t}</text>)}
      {sideStamps.map(([y, t], i) => <text key={i} transform={`translate(293.500 ${y}) rotate(-90)`}>{t}</text>)}
    </g>
    {/* cursor */}
    <path d="M840 652.500h64M872.500 621v40M868.500 655v-4.500h2v-2h4v2h2v4.500" />
    {/* UCS icon */}
    <g stroke="#4a4ab4">
      <path d="M110.500 588.500v58.500h36zM110.500 638.500h8.500v8.500" />
      <g fill="#4a4ab4" stroke="none" fontSize={13} fontFamily="Liberation Sans, sans-serif">
        <text x={111} y={615}>Y</text>
        <text x={128} y={647}>X</text>
      </g>
    </g>
  </svg>
);

const menu = ["Файл", "Правка", "Вид", "Вставка", "Формат", "Сервис", "Рисование", "Размеры", "Редактировать", "Окно", "Справка"];

const WinBtn = ({ label, d }: { label: string; d: string }) => (
  <button aria-label={label} className="w-[26px] h-4 flex items-center justify-center">
    <svg viewBox="0 0 12 12" className="w-3 h-3" fill="none"><path d={d} stroke="#222" strokeWidth={4} /><path d={d} stroke="#f4f4f4" strokeWidth={2} /></svg>
  </button>
);

const Header = () => (
  <header className="h-14 flex pl-[3px] bg-[linear-gradient(#3c3c3c_0_1px,#8a8a8a_1px,#5c5c5c_15px,#3a3a3a_16px,#3f3f3f_30px,#787878_30px,#666_56px)]">
    <button aria-label="Меню AutoCAD" className="mt-2 w-[35px] h-[45px] shrink-0 bg-gradient-to-b from-[#6b6b6b] to-[#5a5a5a] border border-[#333]">
      <svg viewBox="0 0 33 43" className="w-[33px] h-[43px]">
        <path d="M1 33l9-4 2-6 7-1 3 5 8-3 1 4c-6 6-19 9-29 8z" fill="#8e1014" stroke="#5e0a0c" />
        <path d="M7 1l12-1 11 24-8 3-3-5-7 1-2 6-9 4z" fill="#e02a2f" stroke="#b0161b" />
        <path d="M14 8l-2 9 5-1z" fill="#6b1518" stroke="#9d1216" />
        <path d="M9 3l-5 26" stroke="#f4696b" strokeWidth={1.500} />
        <path d="M26 37h7l-3.500 5z" fill="#000" />
      </svg>
    </button>
    <div className="flex-1 min-w-0 flex flex-col">
      <div className="h-[30px] flex items-end">
        <div className="h-[21px] w-36 pl-2 shrink-0 flex items-center bg-gradient-to-b from-[#bdbdbd] to-[#6a6a6a] border border-[#333] border-t-[#999]">
          {["new", "open", "save", "print"].map((n) => (
            <button key={n} aria-label={n} className="w-[22px] h-5 flex items-center"><Icon name={n} /></button>
          ))}
          <button aria-label="Отменить" className="w-[22px] h-5 flex items-center"><svg viewBox="0 0 20 20" className="w-5 h-5"><path d="M8 3L2 8l6 5v-3c4 0 6 1 7 5 2-6-2-9-7-9z" fill="#f0f0f0" stroke="#333" /></svg></button>
          <button aria-label="Повторить" className="w-[22px] h-5 flex items-center"><svg viewBox="0 0 20 20" className="w-5 h-5"><path d="M12 3l6 5-6 5v-3c-4 0-6 1-7 5-2-6 2-9 7-9z" fill="#f0f0f0" stroke="#333" /></svg></button>
        </div>
        <h1 className="flex-1 pr-[150px] h-[30px] leading-[30px] text-right text-[14px] whitespace-nowrap text-[#b4b4b4] font-['Open_Sans',sans-serif]">
          AutoCAD 2009 <span className="font-semibold text-white">Чертеж1.dwg</span>
        </h1>
        <div className="h-[30px] shrink-0 flex items-center pr-1">
          <svg viewBox="0 0 6 6" className="w-1.5 h-1.5 mr-1.5"><path d="M0 0l6 3-6 3z" fill="#eee" /></svg>
          <input aria-label="Поиск" placeholder="Введите ключевое слово или фразу" className="w-[219px] h-[18px] px-px bg-white border border-black text-[11px] placeholder:text-[#aca899] outline-none" />
          <div className="h-[18px] flex border-y border-r border-black bg-gradient-to-b from-[#c2c2c2] to-[#8c8c8c]">
            <button aria-label="Найти" className="w-[25px] flex items-center justify-center"><svg viewBox="0 0 20 20" className="w-4 h-4" fill="none"><Glass /></svg></button>
            <button aria-label="Параметры поиска" className="w-2 border-l border-black flex items-center justify-center"><svg viewBox="0 0 6 4" className="w-1.5 h-1"><path d="M0 0h6L3 4z" fill="#666" /></svg></button>
            <button aria-label="Связь" className="w-6 border-l border-black flex items-center justify-center"><svg viewBox="0 0 16 16" className="w-4 h-4" fill="none" stroke="#222"><path d="M3 4c0 5 4 8 9 7z" fill="#e4e4e4" /><path d="M7 8l5-5M11 2l2 2M5 10l-2 5h8l-2-4" /></svg></button>
            <button aria-label="Избранное" className="w-[23px] border-l border-black flex items-center justify-center"><svg viewBox="0 0 16 16" className="w-4 h-4"><path d="M8 1l2 5h5l-4 3.500 1.500 5.500L8 12l-4.500 3L5 9.500 1 6h5z" fill="#eee" stroke="#222" /></svg></button>
          </div>
          <div className="flex pl-2">
            <WinBtn label="Свернуть" d="M2 9h8" />
            <WinBtn label="Развернуть" d="M2 3h8v6H2z" />
            <WinBtn label="Закрыть" d="M3 3l6 6M9 3l-6 6" />
          </div>
        </div>
      </div>
      <nav className="h-[26px] pl-0.5 pr-1 flex items-center text-[11px]">
        {menu.map((m) => <a key={m} href="#" className="px-2.5 leading-4 text-[#f2f2f2]">{m}</a>)}
        <div className="flex ml-auto">
          <WinBtn label="Свернуть чертеж" d="M1 9h10" />
          <button aria-label="Восстановить чертеж" className="w-[26px] h-4 flex items-center justify-center">
            <svg viewBox="0 0 12 12" className="w-3 h-3" fill="none" stroke="#f4f4f4"><path d="M3.500 2V.5h8v8H10" /><path d="M1.500 3.500h7v7h-7z" strokeWidth={2} /></svg>
          </button>
          <WinBtn label="Закрыть чертеж" d="M3 3l6 6M9 3l-6 6" />
        </div>
      </nav>
    </div>
  </header>
);

const Swatch = () => <span className="w-[11px] h-[11px] shrink-0 mr-1 bg-black" />;

const Toolbars = () => (
  <div className="pt-px pb-[3px] pl-[3px] flex flex-col gap-[3px]">
    <div className="flex overflow-hidden">
      <Bar><Tools list="new open save | print preview publish globe | cut copyclip paste match blockedit | undo v redo v | pan zoom zoomwin zoomprev | properties designcenter palettes sheetset markup calc | help" /></Bar>
      <Bar>
        <Tools list="leader leaderadd leaderdel | leaderalign leadercollect |" />
        <Combo label="Стиль мультивыноски" value="Standard" width="w-[119px]" />
        <Tools list="leaderstyle" />
      </Bar>
      <Bar cut>
        <Tools list="textstyle" />
        <Combo label="Текстовый стиль" value="style1" width="w-[120px]" />
        <Tools list="| dimstyle" />
        <Combo label="Размерный стиль" value="ГОСТ" width="w-[120px]" />
        <Tools list="| tablestyle" />
        <Combo label="Стиль таблиц" value="Standard" width="w-[120px]" pad="pl-1" />
      </Bar>
    </div>
    <div className="flex">
      <Bar>
        <Combo label="Рабочее пространство" value="2" width="w-[175px]" pad="pl-2" />
        <Tools list="gear wshome" />
      </Bar>
      <Bar>
        <Tools list="layers" />
        <Combo label="Слой" value="0" width="w-[300px]" pad="pl-0.5">
          <svg viewBox="0 0 68 18" className="w-[68px] h-[18px] shrink-0" fill="none">
            <path d="M4 6a4 4 0 0 1 8 0c0 3-2 3-2 6H6c0-3-2-3-2-6z" fill="#b9daf5" stroke="#4f7fae" />
            <path d="M6 12h4v3H6z" fill="#777" />
            <path d="M18 2h13v13H18z" fill="#f6f09a" />
            <circle cx={24.500} cy={8.500} r={5.500} fill="#f8dc2c" stroke="#9a8416" />
            <path d="M38.500 6.500h9v9h-9z" stroke="#3568a8" fill="#fff" />
            <path d="M34 2h11v10H34z" fill="#f6f09a" />
            <circle cx={39.500} cy={7} r={4} fill="#f8dc2c" stroke="#a98c16" />
            <path d="M53 9V5c0-4 6-4 6 0v3" stroke="#8a8410" strokeWidth={2} />
            <path d="M57.500 7.500h8v7h-8z" fill="#e5dc2e" stroke="#7a7410" />
          </svg>
          <Swatch />
        </Combo>
        <Tools list="layercur layerprev layerstate" />
      </Bar>
      <Bar>
        <Combo label="Цвет" value="Послою" width="w-[149px]" pad="pl-1"><Swatch /></Combo>
        <Tools list="|" />
        <Combo label="Тип линий" value="Послою" width="w-[160px]" pad="pl-1"><span className="w-16 h-px mr-0.5 shrink-0 bg-black" /></Combo>
        <Tools list="|" />
        <Combo label="Вес линий" value="Послою" width="w-[124px]" pad="pl-1"><span className="w-[35px] h-px mr-1 shrink-0 bg-black" /></Combo>
        <Tools list="|" />
        <Combo label="Стиль печати" value="Поцвету" width="w-[119px]" pad="pl-2" off />
      </Bar>
    </div>
    <div className="flex">
      <Bar>
        <Tools list="dimlinear dimaligned dimarc dimord | dimradius dimjog dimdiam dimang | dimquick dimbase dimcont dimspace dimbreak | tolerance centermark inspect joglinear | dimedit dimtedit dimupdate |" />
        <Combo label="Размер" value="ГОСТ" width="w-[119px]" />
        <Tools list="dimstyle" />
      </Bar>
      <Bar><Tools list="orbit orbitfree orbitcont" /></Bar>
      <Bar><Tools list="wire2d | wire3d hidden realistic conceptual | vsmanage" /></Bar>
      <Bar>
        <Tools list="vpdialog vpsingle vppoly vpobject vpclip |" />
        <Combo label="Масштаб вида" value="Вписать" width="w-[100px]" pad="pl-px" />
      </Bar>
    </div>
  </div>
);

const Canvas = () => (
  <main className="flex-1 min-w-0 ml-[5px] mr-1 flex flex-col border-2 border-[#8b8878] border-b-[#f4f2e8] border-r-[#f4f2e8]">
    <div className="flex-1 min-h-0 flex">
      <div className="flex-1 min-w-0 overflow-hidden bg-[#a9a9a9]"><Sheet /></div>
      <div className="w-[17px] shrink-0 flex flex-col bg-[#f7f6ef]">
        <ScrollBtn dir="up" />
        <div className="flex-[370] " />
        <div className="rotate-90 w-4"><Thumb /></div>
        <div className="flex-[102]" />
        <ScrollBtn dir="down" />
      </div>
    </div>
    <div className="h-[17px] shrink-0 flex bg-[#ece9d8] text-[11px]">
      {["M4 3v8M11 3v8L6 7z", "M10 3v8L5 7z", "M5 3v8l5-4z", "M11 3v8M4 3v8l5-4z"].map((d) => (
        <button key={d} aria-label="Листать вкладки" className="w-[15px] border-r border-b border-[#c9c5b2] flex items-center justify-center">
          <svg viewBox="0 0 14 14" className="w-3.5 h-3.5"><path d={d} fill="#aca899" stroke="#aca899" /></svg>
        </button>
      ))}
      <div className="flex items-stretch leading-4 font-['Liberation_Sans',sans-serif]">
        <svg viewBox="0 0 8 17" className="w-2 h-[17px]"><path d="M0 0l8 17" stroke="#222" /></svg>
        <button className="px-[3px] leading-[17px]">Модель</button>
        <svg viewBox="0 0 12 17" className="w-3 h-[17px]"><path d="M3 0l7 17h2V0z" fill="#fff" /><path d="M3 0l7 17M8 9L5 17" stroke="#222" fill="none" /></svg>
        <button className="leading-[17px] bg-white">Layout1</button>
        <svg viewBox="0 0 10 17" className="w-2.5 h-[17px]"><path d="M0 0h10L4 17H0z" fill="#fff" /><path d="M10 0L4 17" stroke="#222" /></svg>
      </div>
      <div className="ml-auto w-[5px] mr-px border border-[#c9c5b2]" />
      <div className="w-[359px] flex bg-[#f7f6ef]">
        <ScrollBtn dir="left" />
        <div className="flex-[163]" />
        <Thumb />
        <div className="flex-[149]" />
        <ScrollBtn dir="right" />
      </div>
      <div className="w-[17px]" />
    </div>
  </main>
);

const Workspace = () => (
  <div className="flex-1 min-h-0 flex pl-[3px] pr-1.5 pb-1 overflow-hidden">
    <div className="flex gap-[3px] min-h-0">
      <div className="flex flex-col min-h-0">
        <Palette list="ttk from | endpoint midpoint intersect appint extension | center quadrant tangent | perpend parallel insert node | nearest nosnap | osnap" />
        <Palette list="front above under back" />
      </div>
      <div>
        <Palette list="line xline pline polygon rectangle arc circle revcloud spline ellipse ellarc insertblk makeblk point hatch gradient region table textA" />
      </div>
      <div className="flex flex-col min-h-0">
        <Palette list="erase copy mirror offset array move rotate scale stretch trim extend breakpt breakln join chamfer fillet explode" />
        <Palette cut list="textA textI textedit find spell textstyle scaletext" />
      </div>
    </div>
    <Canvas />
    <div className="flex gap-[3px] min-h-0">
      <div className="flex flex-col min-h-0">
        <Palette list="viewmgr | vtop vbottom vleft vright vfront vback | isosw isose isone isonw | camera | vprev" />
        <Palette cut list="ucs | ucsworld ucsprev | ucsface ucsobj ucsview | ucsorigin ucsz ucs3" />
      </div>
      <div>
        <Palette list="union subtract intersection | extface moveface offface delface rotface taperface copyface colorface | copyedge coloredge imprint clean separate shelledit check solidadd interfere slice shell ok" />
      </div>
      <div>
        <Palette list="polysolid box wedge cone sphere cylinder torus pyramid helix planar | extrude presspull sweep revolve loft | union subtract intersection | move3d rotate3d align3d array3d" />
      </div>
    </div>
  </div>
);

const CommandLine = () => (
  <section className="h-[58px] shrink-0 ml-[3px] mr-1 flex bg-[#a9a9a9] rounded-tl-md">
    <div className="w-4 shrink-0 pt-1 flex justify-center items-start">
      <div className="w-3 h-1 bg-[conic-gradient(#111_25%,#999_0)] bg-[length:2px_2px]" />
    </div>
    <div className="flex-1 min-w-0 flex flex-col bg-white rounded-l-sm font-['Liberation_Mono',monospace] text-[13px]">
      <div className="h-[39px] flex border-b border-[#aca899]">
        <div className="flex-1 pl-px leading-4 whitespace-pre">{"C:\\DOCUME~1\\Admin\\LOCALS~1\\Temp\\Чертеж1_1_1_6853.sv$ ...\nКоманда:"}</div>
        <div className="w-4 flex flex-col justify-between"><ScrollBtn dir="up" /><ScrollBtn dir="down" /></div>
      </div>
      <div className="h-[19px] pt-0.5 flex items-center">
        <label htmlFor="cmd" className="pl-px leading-4">Команда:</label>
        <input id="cmd" className="flex-1 min-w-0 h-4 outline-none" />
        <div className="w-[68px] flex bg-[#f7f6ef]"><ScrollBtn dir="left" /><Thumb /><div className="flex-1" /><ScrollBtn dir="right" /></div>
        <div className="w-[17px] h-full bg-[#ece9d8]" />
      </div>
    </div>
  </section>
);

const modes: [string, boolean, ReactNode][] = [
  ["ШАГ", false, <path d="M3 4.500h8M3 7.500h8M3 10.500h8M3 13.500h8M13.500 4v10" strokeDasharray="1 2" stroke="#111" />],
  ["СЕТКА", true, <path d="M1.500 1.500h14v14h-14zM4.500 1v14M8.500 1v14M12.500 1v14M1 4.500h14M1 8.500h14M1 12.500h14" stroke="#333" />],
  ["ОРТО", true, <path d="M2.500 1v13.500h13M3 9.500h5v5" />],
  ["ОТС-ПОЛЯР", false, <path d="M13 10a5 5 0 1 1-3-5M8 10h7M8 10l6-7M11 6l2 4" strokeWidth={1.300} />],
  ["ПРИВЯЗКА", true, <><path d="M3.500 3.500h12v12h-12z" fill="#f6f6f6" /><circle cx={2.500} cy={2.500} r={1.800} stroke={O} fill="#fff" /></>],
  ["ОТС-ОБЪЕКТ", true, <path d="M13 3L3 13.500h12M8 9c2 1 3 2 3 4" stroke="#222" />],
  ["ДПСК", true, <><path d="M2.500 1v13.500h13M3 14l8-8" /><path d="M12 1L9 6h2l-2 4 6-6h-2l2-3z" fill="#ffc62e" stroke="#e8861a" /></>],
  ["ДИН", true, <path d="M6 2v9M1 6.500h10M9.500 9.500h6v3h-6z" stroke="#111" strokeWidth={1.300} />],
  ["ВЕС", true, <><path d="M2 8.500h13" stroke="#111" /><path d="M9 2v12M9 9h6" stroke="#111" strokeWidth={2} /></>],
  ["БС", false, <path d="M4.500 3.500h8v11h-8zM6 6h5M6 8.500h2m1 0h2m-5 2h2m1 0h2m-5 2h2m1 0h2" stroke="#111" fill="#eee" />],
];

const SBtn = ({ label, w = "w-[22px]", children }: { label: string; w?: string; children: ReactNode }) => (
  <button aria-label={label} className={`${w} h-[22px] shrink-0 border-r border-[#555] bg-gradient-to-b from-[#b2b2b2] to-[#8e8e8e] flex items-center justify-center`}>
    <svg viewBox="0 0 20 20" className="w-5 h-5" fill="none" stroke="#333">{children}</svg>
  </button>
);

const StatusBar = () => (
  <footer className="h-[26px] shrink-0 pl-[3px] pr-1 bg-[#666] relative">
    <div className="h-[22px] flex items-center bg-gradient-to-b from-[#6a6a6a] to-[#909090] border-t border-black">
      <span className="w-[151px] pl-3 shrink-0 text-[11px] text-[#b3a994] font-['Liberation_Sans',sans-serif]">343.23, -25.80, 0.00</span>
      {modes.map(([label, on, icon]) => (
        <button key={label} aria-label={label} className={`w-[22px] h-[22px] shrink-0 border-r border-[#555] flex items-center justify-center ${on ? "bg-gradient-to-b from-[#d9eef3] via-[#a9d3de] to-[#d3ecf2]" : "bg-gradient-to-b from-[#b2b2b2] to-[#8e8e8e]"}`}>
          <svg viewBox="0 0 17 17" className="w-[17px] h-[17px]" fill="none" stroke="#333">{icon}</svg>
        </button>
      ))}
      <div className="flex-1" />
      <button className="w-9 h-[22px] shrink-0 border-r border-[#555] bg-gradient-to-b from-white to-[#cfeaf1] text-[12px] whitespace-nowrap">ЛИСТ</button>
      <SBtn label="Быстрый просмотр листов"><path d="M3.500 3.500h13v9h-13zM1 15.500h18M7 6v5h5z" fill="#eee" /></SBtn>
      <SBtn label="Быстрый просмотр чертежей"><path d="M2.500 4.500h7v6h-7zM10.500 4.500h7v6h-7z" fill="#eee" /><path d="M2 14h16" strokeWidth={2} /></SBtn>
      <span className="w-[11px] shrink-0" />
      <SBtn label="Панорамирование">{icons.pan}</SBtn>
      <SBtn label="Зумирование">{icons.zoom}</SBtn>
      <SBtn label="Штурвал"><C x={10} y={10} r={7} f="#ddd" /><C x={10} y={10} r={3} f="#fff" /><path d="M5 5l3 3M15 5l-3 3M5 15l3-3M15 15l-3-3" /></SBtn>
      <SBtn label="Аниматор"><path d="M4.500 6.500h12v10h-12z" fill="#eee" /><path d="M5 4h12" strokeWidth={2} strokeDasharray="3 1" /><path d="M9 9l4 2.500L9 14z" fill="#333" /></SBtn>
      <span className="w-[25px] shrink-0" />
      <SBtn label="Назад" w="w-3"><path d="M12 6v8l-5-4z" fill="#ccc" stroke="none" /></SBtn>
      <SBtn label="Видовой экран"><path d="M2.500 2.500h15v15h-15z" stroke="#c22" strokeDasharray="2 1" /><path d="M4 4.500h14M4.500 4v14" stroke="#333" /><path d="M8 8h7v7H8z" stroke={B} fill="#ddd" /></SBtn>
      <SBtn label="Вперед" w="w-3"><path d="M8 6v8l5-4z" fill="#ccc" stroke="none" /></SBtn>
      <SBtn label="Видимость аннотаций" w="w-[26px]"><path d="M3 16l7-13 2 7M3 16l6-3 3 3" strokeWidth={1.500} fill="#ddd" /><circle cx={15} cy={11} r={2.500} fill="#cfe6f7" stroke={B} /><path d="M15 14v3" /></SBtn>
      <SBtn label="Автомасштаб"><path d="M4 17l6-14 6 14M6 12l8 1M4 6l6 4" stroke="#777" fill="#c4c4c4" /></SBtn>
      <span className="w-[5px] shrink-0" />
      <SBtn label="Рабочее пространство">{icons.gear}</SBtn>
      <SBtn label="Блокировка" w="w-[19px]"><path d="M3.500 8.500h10v8h-10z" fill="#eee" strokeWidth={1.500} /><path d="M11.500 8V5c0-4 6-4 6 0v4M8 11v3" strokeWidth={1.500} /></SBtn>
      <span className="w-1.5 shrink-0" />
      <SBtn label="Меню строки состояния" w="w-[17px]"><path d="M7 9h6l-3 4z" fill="#111" stroke="none" /></SBtn>
      <SBtn label="Очистить экран"><path d="M3.500 3.500h14v13h-14z" fill="#f2f2f2" /><path d="M4 5h13" strokeWidth={3} /></SBtn>
      <svg viewBox="0 0 14 20" className="w-3.5 h-5 shrink-0" fill="#e6e3d6"><path d="M10 6h2v2h-2zM10 10h2v2h-2zM6 10h2v2H6zM10 14h2v2h-2zM6 14h2v2H6zM2 14h2v2H2z" /></svg>
    </div>
    <div role="tooltip" className="absolute right-[191px] -top-[17px] h-[22px] px-1 leading-5 bg-[#f1f1f1] border border-[#767676] rounded-xs text-[11px] text-[#4c4c4c] whitespace-nowrap">
      Пространство (модели или листа)
    </div>
  </footer>
);

const tray: ReactNode[] = [
  <><path d="M1 1h14v14H1z" fill="#f4f4f4" /><path d="M2 2h4v5l5-5h3L8 8l6 6h-4L6 10v4H2z" fill="#d02424" /><path d="M9 15h6V9z" fill="#333" /></>,
  <><circle cx={5} cy={5} r={4} fill="#6cb22c" /><circle cx={11} cy={11} r={4} fill="#6cb22c" /><circle cx={8} cy={8} r={6} fill="#7cc436" /><path d="M5 8l2 3 4-5" stroke="#fff" strokeWidth={2} fill="none" /></>,
  <><circle cx={11} cy={5} r={4.500} fill="#5fae6e" /><path d="M2 3h9v7H2z" fill="#1c3c9c" stroke="#ddd" /><path d="M1 13h14M8 10v5" stroke="#e8c42e" strokeWidth={2} /></>,
  <><path d="M1 12h2v3H1zM4 9h2v6H4zM7 6h2v9H7zM10 3h2v12h-2z" fill="#ddd" /><path d="M9 7l6 8M15 7l-6 8" stroke="#d02424" strokeWidth={2} /></>,
  <><path d="M6 2h9v7H6z" fill="#555" stroke="#999" /><path d="M1 5h9v7H1zM4 13h4v2H4z" fill="#333" stroke="#888" /></>,
  <><path d="M1 1h14v14H1z" fill="#4a9a9a" /><path d="M4 13c3-2 1-5 4-6s3-4 6-4M8 7l4 6M4 4l4 3" stroke="#bfe0d8" fill="none" /></>,
  <><circle cx={7} cy={7} r={6} fill="#c9dfea" stroke="#888" /><circle cx={7} cy={7} r={2} fill="#f0d070" /><path d="M9 15V9h6v6z" fill="#e8b05a" /></>,
  <><path d="M1 6h3l4-4v12L4 10H1z" fill="#eee" stroke="#555" /><path d="M10 5c1 2 1 4 0 6M12 3c2 3 2 7 0 10" stroke="#fff" fill="none" /></>,
  <><path d="M6 9l7-1 2 4-7 3z" fill="#555" stroke="#ccc" /><path d="M1 2h8v6L7 6 5 9 2 6l2-2z" fill="#4cae3c" /></>,
  <><path d="M1 11l6-8h4l-2 4h5l-8 8 1-4z" fill="#f0a030" stroke="#a05a10" /><path d="M4 12l7-8" stroke="#fff" /></>,
  <><path d="M1 7l4 1 3 4 3-4 4-1-3 7H5z" fill="#d8a860" stroke="#7a5a20" /><path d="M6 1h4v9l-2 2-2-2z" fill="#8fa6c0" /></>,
  <><path d="M1 2h14v12H1z" fill="#e4e4e4" stroke="#999" /><circle cx={8} cy={8} r={4} fill="none" stroke="#c99" /><circle cx={8} cy={8} r={1.500} fill="#c33" /></>,
  <><path d="M1 1h14v14H1z" fill="#fff" stroke="#2e8e3e" /><path d="M3 3l4 1-3 3zM13 3l-4 1 3 3zM3 13l4-1-3-3zM13 13l-4-1 3-3z" fill="#1e8e2e" stroke="#1e8e2e" /></>,
  <><path d="M1 1h14v10H1z" fill="#777" stroke="#333" /><path d="M2 12h4v3H2zM9 12h4v3H9z" fill="#bbb" stroke="#333" /></>,
];

const Taskbar = () => (
  <div className="h-[30px] shrink-0 flex items-stretch text-white bg-[linear-gradient(#3a80f2_0,#2860dc_4px,#2459d4_60%,#1c46b0)]">
    <button className="w-[87px] shrink-0 pl-2.5 rounded-r-xl flex items-center gap-0.5 bg-[linear-gradient(#5eb05c_0,#3c9438_5px,#379234_70%,#2a7428)] text-[16px] italic font-bold font-['Open_Sans',sans-serif]">
      <svg viewBox="0 0 16 16" className="w-4 h-4 shrink-0">
        <path d="M2 4c2-2 4-1 5 0L6 8C4 6.500 3 7 1 8z" fill="#f0562a" />
        <path d="M8 4c2 1 4 1 6 0l-1 4c-2 1-4 1-6 0z" fill="#86c440" />
        <path d="M1 9c2-1 3-1 5 0l-1 4c-1-1-3-1-5 0z" fill="#4a9ae8" />
        <path d="M7 9c2 1 4 1 6 0l-1 4c-2 1-4 1-6 0z" fill="#fcc62e" />
      </svg>
      пуск
    </button>
    <div className="pl-2.5 flex gap-0.5 items-center text-[11px]">
      <button className="w-[159px] h-6 pl-2.5 rounded-xs flex items-center gap-1 bg-[#1c4cab] shadow-[inset_1px_1px_2px_#0f2f78] whitespace-nowrap">
        <svg viewBox="0 0 16 16" className="w-4 h-4 shrink-0"><path d="M0 4h16v12H0z" fill="#e8e8e8" /><path d="M5 1h5l4 10-3 1-1-3-4 1-1 3-3 1z" fill="#c4161c" /><path d="M7 4l-1 4 3-1z" fill="#fff" /></svg>
        AutoCAD 2009 - [Чер...
      </button>
      <button className="w-[159px] h-6 pl-2.5 rounded-xs flex items-center gap-1 bg-gradient-to-b from-[#5a97fb] to-[#3a7bf0] whitespace-nowrap">
        <svg viewBox="0 0 16 16" className="w-4 h-4 shrink-0"><path d="M4 1h11v13H4z" fill="#fff" stroke="#345" /><path d="M1 3h9v9H1z" fill="#2a5ab4" /><path d="M2.500 5l1.500 5 1.500-4L7 10l1.500-5" stroke="#fff" fill="none" /><path d="M11 5h3M11 8h3M11 11h3" stroke="#345" /></svg>
        Документ1 - Microso...
      </button>
    </div>
    <span className="ml-auto w-4 mr-5 self-center h-4 leading-4 text-[11px] bg-[#3464cc]">RU</span>
    <div className="w-[309px] shrink-0 pl-2.5 flex items-center gap-0.5 border-l border-[#0c4fb0] bg-[linear-gradient(#1cb0f4_0,#1494ea_4px,#1190e8_70%,#0e72c8)] text-[11px]">
      {tray.map((icon, i) => <svg key={i} viewBox="0 0 16 16" className="w-4 h-4 shrink-0">{icon}</svg>)}
      <time className="ml-auto pr-3">10:16</time>
    </div>
  </div>
);

export default function App() {
  return (
    <div className="h-screen flex flex-col overflow-hidden text-[11px] font-['DejaVu_Sans_Condensed','DejaVu_Sans',sans-serif]">
      <div className="flex-1 min-h-0 flex">
        <div className="w-[5px] shrink-0 flex flex-col">
          <div className="h-[26px] bg-[#2a4fc0]" />
          <div className="h-32 bg-[#9dbcf5]" />
          <div className="flex-1 bg-[#dbe7fb] border-r border-[#8aa4d4]" />
          <div className="h-10 bg-[#a9c6f4]" />
          <div className="h-6 bg-[#ece9d8]" />
        </div>
        <div className="flex-1 min-w-0 flex flex-col bg-[#666] border-x border-[#3c3c3c]">
          <Header />
          <Toolbars />
          <Workspace />
          <CommandLine />
          <StatusBar />
        </div>
      </div>
      <div className="h-0.5 shrink-0 bg-[#ece9d8]" />
      <Taskbar />
    </div>
  );
}
